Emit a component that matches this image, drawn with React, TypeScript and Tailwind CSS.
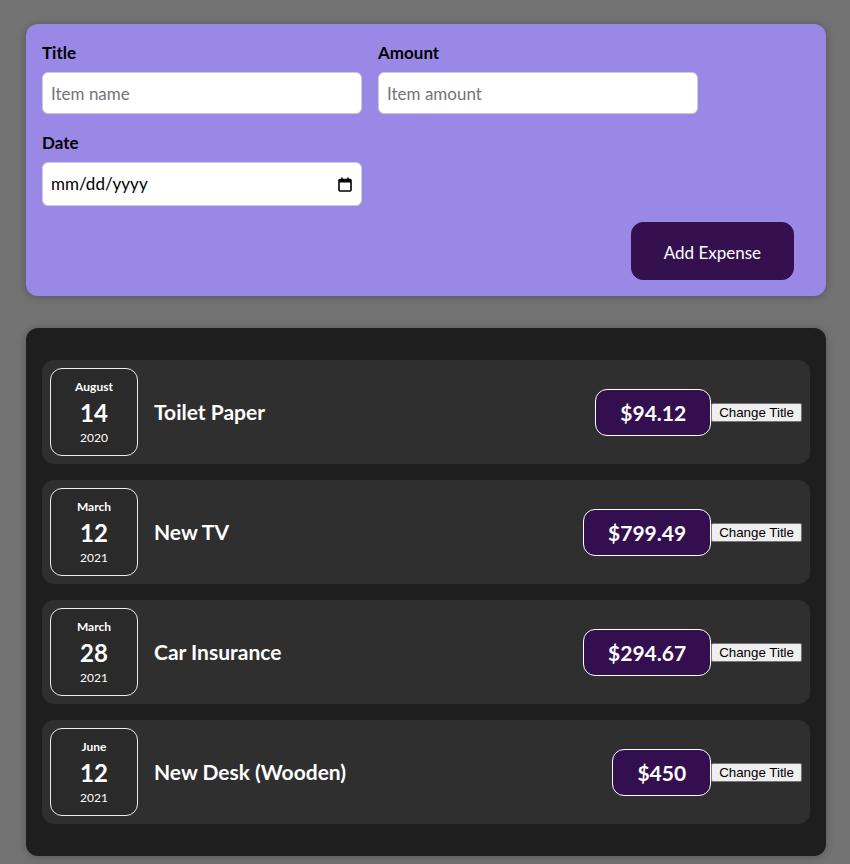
import React from "react";

const items = [
  { month: "August", day: "14", year: "2020", title: "Toilet Paper", amount: "$94.12" },
  { month: "March", day: "12", year: "2021", title: "New TV", amount: "$799.49" },
  { month: "March", day: "28", year: "2021", title: "Car Insurance", amount: "$294.67" },
  { month: "June", day: "12", year: "2021", title: "New Desk (Wooden)", amount: "$450" },
];

export default function App() {
  return (
    <div
      className="min-h-[864px] bg-[#737373] pt-6 pb-2"
      style={{ fontFamily: "Lato, 'Noto Sans', sans-serif" }}
    >
      <div className="ml-[26px] w-[800px] rounded-[12px] bg-[#9a88e6] p-4 shadow-[0_1px_8px_rgba(0,0,0,0.25)]">
        <div className="mb-4 flex flex-wrap gap-4">
          <div>
            <label className="mb-[6px] block text-[17px] font-bold leading-[26px] text-black">Title</label>
            <input
              className="h-[42px] w-[320px] rounded-[6px] border border-[#cccccc] bg-white px-2 text-[17px] text-black placeholder:text-[#757575] outline-none"
              placeholder="Item name"
            />
          </div>
          <div>
            <label className="mb-[6px] block text-[17px] font-bold leading-[26px] text-black">Amount</label>
            <input
              className="h-[42px] w-[320px] rounded-[6px] border border-[#cccccc] bg-white px-2 text-[17px] text-black placeholder:text-[#757575] outline-none"
              placeholder="Item amount"
            />
          </div>
          <div>
            <label className="mb-[6px] block text-[17px] font-bold leading-[26px] text-black">Date</label>
            <div className="flex h-[44px] w-[320px] items-center justify-between rounded-[6px] border border-[#cccccc] bg-white pl-2 pr-[9px] text-[17px] text-black">
              <span>mm/dd/yyyy</span>
              <svg width="14" height="15" viewBox="0 0 14 15" fill="none">
                <rect x="1" y="2.5" width="12" height="11.5" rx="1" stroke="black" strokeWidth="1.6" />
                <rect x="1" y="2.5" width="12" height="3" fill="black" />
                <rect x="3.2" y="0.5" width="1.6" height="3" fill="black" />
                <rect x="9.2" y="0.5" width="1.6" height="3" fill="black" />
              </svg>
            </div>
          </div>
        </div>
        <div className="flex justify-end">
          <button className="mr-4 h-[58px] rounded-[12px] border border-[#35104f] bg-[#35104f] px-8 pt-1 text-[17px] leading-6 text-white">
            Add Expense
          </button>
        </div>
      </div>

      <div className="ml-[26px] mt-8 flex w-[800px] flex-col gap-4 rounded-[12px] bg-[#1e1e1e] px-4 py-8 shadow-[0_1px_8px_rgba(0,0,0,0.25)]">
        {items.map((it, i) => (
          <div key={i} className="flex h-[104px] items-center rounded-[12px] bg-[#2f2f2f] p-2">
            <div className="flex h-[88px] w-[88px] shrink-0 flex-col items-center justify-center rounded-[12px] border border-[#ececec] bg-[#2a2a2a] text-white">
              <div className="text-xs font-bold leading-4">{it.month}</div>
              <div className="text-2xl font-bold leading-[35px]">{it.day}</div>
              <div className="text-xs leading-4">{it.year}</div>
            </div>
            <div className="ml-4 flex flex-1 items-center justify-between">
              <h2 className="text-[21px] font-bold text-white">{it.title}</h2>
              <div className="rounded-[12px] border border-white bg-[#330f4f] px-6 py-[8px] text-[21px] font-bold leading-[29px] text-white">
                {it.amount}
              </div>
            </div>
            <button
              className="h-[19px] shrink-0 rounded-[2px] border border-[#767676] bg-[#efefef] px-[7px] text-[13.33px] leading-[15px] text-black"
              style={{ fontFamily: "'Liberation Sans', Arial, sans-serif" }}
            >
              Change Title
            </button>
          </div>
        ))}
      </div>
    </div>
  );
}
